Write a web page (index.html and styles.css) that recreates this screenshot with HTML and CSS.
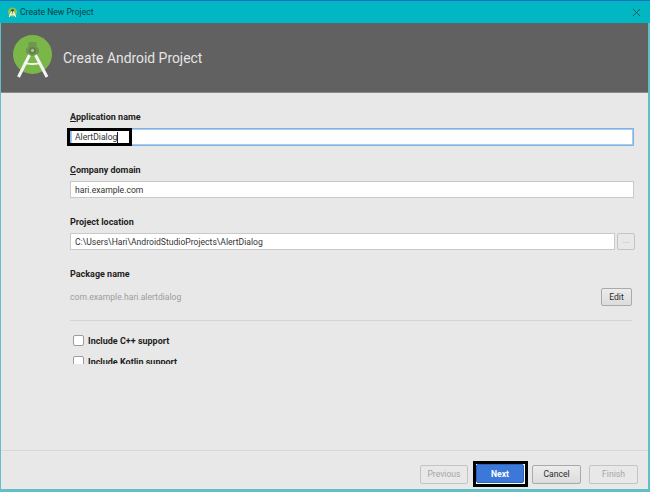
FILE: index.html
```html
<!DOCTYPE html>
<html lang="en">
<head>
<meta charset="utf-8">
<title>Create New Project</title>
<link rel="stylesheet" href="styles.css">
</head>
<body>
<div class="window">
  <div class="titlebar">
    <svg class="title-icon" viewBox="0 0 12 12" width="11" height="11"><circle cx="6" cy="5.500" r="5" fill="#8dc152"/><circle cx="6" cy="4" r="1.800" fill="#4a5a3a"/><path d="M5.200 5 2.400 11M6.800 5l2.800 6M3.500 8.500h5" stroke="#fff" stroke-width="1.200" fill="none"/></svg>
    <span class="title-text">Create New Project</span>
    <svg class="close" viewBox="0 0 10 10" width="9" height="9"><path d="M1 1l8 8M9 1l-8 8" stroke="#0c5a62" stroke-width="1.100"/></svg>
  </div>
  <div class="header">
    <svg class="logo" viewBox="0 0 40 44" width="40" height="44">
      <circle cx="19.500" cy="19.500" r="19.500" fill="#7ab648"/>
      <path d="M15.500 7h8v4.500l2.500 2.500v3.500l-3.500 3.500h-6l-3.500-3.500V14l2.500-2.500z" fill="#6f9650"/>
      <circle cx="19.500" cy="15.500" r="3.300" fill="#5f7a47"/>
      <circle cx="19.500" cy="15.500" r="1.700" fill="#a9c490"/>
      <path d="M16.500 20 5.500 42M22.500 20l11.500 22" stroke="#f4f4f4" stroke-width="3" fill="none"/>
      <path d="M11 27.500c3.500 2 13.500 2 17 0" stroke="#f4f4f4" stroke-width="2" fill="none"/>
    </svg>
    <h1 class="header-title">Create Android Project</h1>
  </div>
  <div class="content">
    <div class="form">
      <label class="field-label label-first"><u>A</u>pplication name</label>
      <div class="input-wrap">
        <div class="input input-focus">AlertDialog<span class="caret"></span></div>
        <div class="annotation"></div>
      </div>
      <label class="field-label label-gap"><u>C</u>ompany domain</label>
      <div class="input">hari.example.com</div>
      <label class="field-label label-gap">Project location</label>
      <div class="row">
        <div class="input input-grow">C:\Users\Hari\AndroidStudioProjects\AlertDialog</div>
        <button class="dots">...</button>
      </div>
      <label class="field-label label-gap">Package name</label>
      <div class="package-row">
        <span class="package-name">com.example.hari.alertdialog</span>
        <button class="btn edit">Edit</button>
      </div>
      <div class="divider"></div>
      <div class="checks">
        <div class="check"><span class="box"></span><span class="check-label">Include C++ support</span></div>
        <div class="check"><span class="box"></span><span class="check-label">Include Kotlin support</span></div>
      </div>
    </div>
    <div class="spacer"></div>
    <div class="footer">
      <button class="btn foot previous disabled">Previous</button>
      <span class="next-frame"><button class="btn next">Next</button></span>
      <button class="btn foot">Cancel</button>
      <button class="btn foot disabled finish">Finish</button>
    </div>
  </div>
</div>
</body>
</html>
```
FILE: styles.css
```css
* { box-sizing: border-box; }
html, body { margin: 0; padding: 0; }
body {
  width: 650px;
  height: 492px;
  overflow: hidden;
  font-family: Roboto, "Open Sans", sans-serif;
  font-size: 8.6px;
  color: #1c1c1c;
  background: #5cbcc4;
}
.window {
  width: 650px;
  height: 492px;
  display: flex;
  flex-direction: column;
  padding: 1px 2px 3px 1px;
  background: #63bfc6;
}
.titlebar {
  height: 22px;
  flex: none;
  display: flex;
  align-items: center;
  background: #00b7c3;
  padding: 0 9px 0 7px;
  margin: 0 -2px 0 -1px;
  box-shadow: 0 -1px 0 #1b6fc0;
}
.title-icon { flex: none; margin-right: 2px; }
.title-text { font-size: 8.6px; color: #063f45; flex: 1; }
.close { flex: none; }
.header {
  height: 70px;
  flex: none;
  display: flex;
  align-items: center;
  background: #616161;
  border-bottom: 1px solid #8a8a8a;
  padding-left: 12px;
}
.logo { flex: none; margin-bottom: 1px; }
.header-title {
  margin: 0 0 0 10px;
  font-size: 13.9px;
  font-weight: 400;
  color: #e4e4e4;
}
.content {
  flex: 1;
  display: flex;
  flex-direction: column;
  background: #e8e8e8;
  min-height: 0;
}
.form {
  height: 271px;
  flex: none;
  padding: 18px 14px 0 69px;
  overflow: hidden;
}
.spacer {
  flex: 1;
}
.field-label {
  display: block;
  font-weight: 700;
  font-size: 9px;
  line-height: 12px;
  color: #1e1e1e;
}
.label-first { margin-bottom: 5px; }
.label-gap { margin-top: 18px; margin-bottom: 5px; }
.input-wrap { position: relative; }
.input {
  height: 17px;
  background: #fff;
  border: 1px solid #c9c9c9;
  padding-left: 4px;
  line-height: 16px;
  font-size: 8.6px;
  color: #333;
  white-space: nowrap;
}
.input-focus { height: 18px; line-height: 16px; border-color: #7fb2e5; box-shadow: 0 0 0 1px #a9cbee inset; }
.caret {
  display: inline-block;
  width: 1px;
  height: 12px;
  background: #222;
  vertical-align: middle;
}
.annotation {
  position: absolute;
  left: -3px;
  top: 0;
  width: 65px;
  height: 18px;
  border: 3px solid #000;
}
.row { display: flex; gap: 2px; align-items: center; }
.input-grow { flex: 1; }
.dots {
  width: 18px;
  height: 17px;
  padding: 0 0 3px;
  border: 1px solid #c4c4c4;
  border-radius: 2px;
  background: #e8e8e8;
  color: #a8a8a8;
  font: 8px Roboto, sans-serif;
  margin-right: -1px;
}
.package-row {
  display: flex;
  justify-content: space-between;
  align-items: center;
  height: 18px;
  padding-right: 2px;
  margin-top: 8px;
}
.package-name { color: #9c9c9c; font-size: 8.6px; }
.btn {
  font-family: Roboto, sans-serif;
  font-size: 8.6px;
  color: #2a2a2a;
  border: 1px solid #a9a9a9;
  border-radius: 2px;
  background: linear-gradient(#ececec, #dcdcdc);
  padding: 0;
}
.edit { width: 31px; height: 18px; }
.divider {
  height: 1px;
  background: #d4d4d4;
  margin-top: 14px;
  margin-right: 2px;
}
.checks { padding: 13px 0 0 3px; display: flex; flex-direction: column; gap: 8px; }
.check { display: flex; align-items: center; height: 13px; }
.box {
  width: 11px;
  height: 11px;
  flex: none;
  background: #fff;
  border: 1px solid #9c9c9c;
  border-radius: 2px;
  margin-right: 4px;
}
.check-label { font-weight: 700; font-size: 9px; color: #1e1e1e; }
.footer {
  flex: none;
  height: 39px;
  display: flex;
  align-items: center;
  justify-content: flex-end;
  border-top: 1px solid #d8d8d8;
  padding: 8px 10px 0 0;
  gap: 5px;
}
.foot { width: 49px; height: 19px; }
.previous { width: 48px; }
.finish { margin-left: 3px; }
.disabled { color: #a6a6a6; border-color: #c4c4c4; background: #e8e8e8; }
.next-frame {
  display: flex;
  border: 3px solid #000;
  background: #fff;
  padding: 0 1px 1px 0;
  margin-right: -1px;
}
.next {
  display: block;
  background: #3c78d8;
  border-color: #2d62b8;
  color: #fff;
  font-weight: 700;
  width: 48px;
  height: 19px;
}
```
